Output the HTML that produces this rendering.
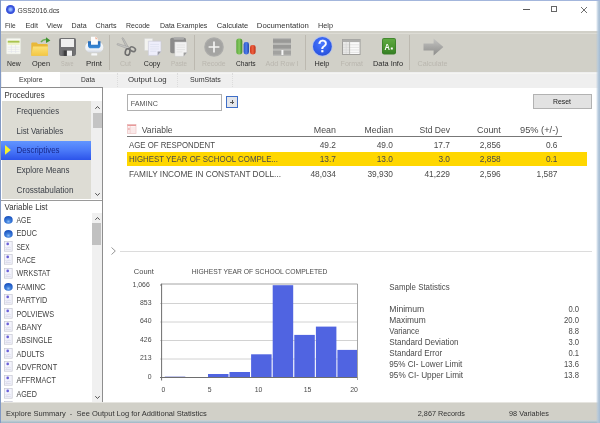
<!DOCTYPE html>
<html><head><meta charset="utf-8"><title>GSS2016.dcs</title>
<style>
html,body{margin:0;padding:0}
body{width:600px;height:423px;position:relative;overflow:hidden;background:#fff;font-family:"Liberation Sans",sans-serif}
.a{position:absolute}
.t{position:absolute;white-space:pre;display:block;will-change:transform}
svg{position:absolute;overflow:visible}
</style></head><body>
<!-- frame -->
<div class="a" style="left:0;top:0;width:600px;height:1px;background:#a3b6dc"></div>
<!-- window controls -->
<div class="a" style="left:522.5px;top:9.3px;width:7px;height:1px;background:#5a5a5a"></div>
<div class="a" style="left:551.3px;top:6.4px;width:5.6px;height:5.4px;border:1px solid #666;box-sizing:border-box"></div>
<svg style="left:581px;top:6.6px" width="6" height="6" viewBox="0 0 6 6"><path d="M0 0L6 6M6 0L0 6" stroke="#555" stroke-width="0.85" fill="none"/></svg>
<!-- title icon -->
<div class="a" style="left:6.2px;top:5.2px;width:8.6px;height:8.6px;border-radius:50%;background:radial-gradient(circle,#9fc0ff 0,#8ab0ff 18%,#3a55de 48%,#3048d4 100%)"></div>
<!-- toolbar -->
<div class="a" style="left:0;top:31.4px;width:600px;height:40.8px;background:#d1d0c8"></div>
<div class="a" style="left:0;top:33px;width:600px;height:1px;background:#dddcd5"></div>
<!-- separators -->
<div class="a" style="left:108.7px;top:35px;width:1px;height:35px;background:#bcb9b0"></div>
<div class="a" style="left:193.6px;top:35px;width:1px;height:35px;background:#bcb9b0"></div>
<div class="a" style="left:305.4px;top:35px;width:1px;height:35px;background:#bcb9b0"></div>
<div class="a" style="left:408.6px;top:35px;width:1px;height:35px;background:#bcb9b0"></div>
<!-- New -->
<svg style="left:6.2px;top:38.2px" width="15" height="16.4" viewBox="0 0 15 16.4">
<rect x="0.3" y="0.3" width="14.4" height="15.8" rx="1.2" fill="#f8f9f3" stroke="#dedfd6" stroke-width="0.6"/>
<rect x="1.7" y="2.7" width="11.8" height="2.1" fill="#a9c44e"/>
<rect x="1.7" y="4.8" width="11.8" height="2.2" fill="#eef3cc"/>
<path d="M1.7 9.2H13.5M1.7 11.4H13.5M1.7 13.6H13.5M5.4 7V15M9.6 7V15" stroke="#e0e3ea" stroke-width="0.6" fill="none"/>
</svg>
<!-- Open -->
<svg style="left:31.4px;top:36.6px" width="20" height="19" viewBox="0 0 20 19">
<defs><linearGradient id="fg" x1="0" y1="0" x2="0" y2="1"><stop offset="0" stop-color="#fbe17a"/><stop offset="1" stop-color="#f4c742"/></linearGradient></defs>
<path d="M0.3 6.6 Q0.3 5.6 1.3 5.6 H5.6 L7 7 H15.8 Q16.8 7 16.8 8 V18.6 H0.3Z" fill="#e9b838"/>
<path d="M2 9.4 H16.9 V18.7 H0.2 Z" fill="url(#fg)"/>
<path d="M10 5 Q12.6 1.6 16.4 2.8" stroke="#58a840" stroke-width="1.5" fill="none" opacity=".85"/>
<path d="M15 0.3 L19.4 3.6 L15 6 Z" fill="#3f9230"/>
</svg>
<!-- Save (disabled) -->
<svg style="left:58.9px;top:37.6px" width="17" height="18" viewBox="0 0 17 18">
<rect x="0" y="0" width="17" height="17.9" rx="1.8" fill="#717173"/>
<rect x="2" y="1" width="13" height="8" fill="#efefef"/>
<rect x="3.6" y="12.4" width="10.4" height="5.5" fill="#5a5a5c"/>
<rect x="5.1" y="12.6" width="2.8" height="5.3" fill="#3c3c3e"/>
<rect x="7.9" y="12.6" width="5.2" height="5.3" fill="#f1f1f1"/>
</svg>
<!-- Print -->
<svg style="left:85px;top:36px" width="18.5" height="20" viewBox="0 0 18.5 20">
<defs><linearGradient id="pb" x1="0" y1="0" x2="0" y2="1"><stop offset="0" stop-color="#f7f9fc"/><stop offset=".7" stop-color="#eef1f6"/><stop offset="1" stop-color="#cfd4de"/></linearGradient>
<linearGradient id="pl" x1="0" y1="0" x2="0" y2="1"><stop offset="0" stop-color="#2468b8"/><stop offset="1" stop-color="#3b8cd8"/></linearGradient></defs>
<rect x="0.2" y="6" width="18.1" height="10.6" rx="5.2" fill="url(#pb)"/>
<path d="M3 5.3 H15.5 V9.4 Q15.5 12.2 12.6 12.2 H5.9 Q3 12.2 3 9.4Z" fill="url(#pl)"/>
<path d="M6 0.8 H11 L12.9 2.7 V8.8 H6Z" fill="#fdfdfd"/>
<path d="M10.4 0.6 L13 3.2 H10.4Z" fill="#f2b49a"/>
<rect x="6.3" y="17.2" width="5.9" height="2.3" rx="0.6" fill="#f6f7f9"/>
</svg>
<!-- Cut (disabled) -->
<svg style="left:115.5px;top:36.5px" width="20" height="19" viewBox="0 0 20 19">
<path d="M5.9 1.2 Q6.6 0.2 7.4 1.2 L12.6 10.6 L11 11.8 Z" fill="#c2c2c0" stroke="#9b9b99" stroke-width="0.6"/>
<path d="M1 7.8 Q0.6 6.6 1.9 6.6 L13 10 L12 11.9 Z" fill="#c6c6c4" stroke="#a0a09e" stroke-width="0.6"/>
<ellipse cx="11.6" cy="15" rx="2.3" ry="3.3" transform="rotate(12 11.6 15)" fill="none" stroke="#6c6c6c" stroke-width="1.6"/>
<ellipse cx="16.6" cy="12.2" rx="3" ry="2.1" transform="rotate(28 16.6 12.2)" fill="none" stroke="#747474" stroke-width="1.6"/>
</svg>
<!-- Copy -->
<svg style="left:144px;top:38.2px" width="18" height="18" viewBox="0 0 18 18">
<rect x="0.4" y="0.3" width="8.4" height="12.4" fill="#f3f3f0" stroke="#d4d4d2" stroke-width="0.6"/>
<path d="M4.4 3.2 H17 V13.4 L13.6 17.4 H4.4Z" fill="#eeeefb" stroke="#c9cad6" stroke-width="0.6"/>
<path d="M6.2 6.4H15M6.2 8.7H15M6.2 11H15M6.2 13.3H12.4" stroke="#dadcec" stroke-width="0.7"/>
<path d="M17 13.4 H13.6 V17.4Z" fill="#9a9ba6"/>
</svg>
<!-- Paste (disabled) -->
<svg style="left:170.4px;top:36.8px" width="18" height="20" viewBox="0 0 18 20">
<rect x="0.2" y="0.8" width="15.8" height="15.4" rx="1.8" fill="#8b8b8b"/>
<rect x="3.6" y="0.2" width="10.4" height="2.6" rx="1" fill="#aaaaaa"/>
<path d="M4.8 4.9 H16.9 V15.4 L13.6 19.4 H4.8Z" fill="#f2f2f2" stroke="#c4c4c4" stroke-width="0.5"/>
<path d="M6.6 8H15M6.6 10.3H15M6.6 12.6H15M6.6 14.9H12.4" stroke="#dedede" stroke-width="0.7"/>
<path d="M16.9 15.4 H13.6 V19.4Z" fill="#9e9e9e"/>
</svg>
<!-- Recode (disabled) -->
<svg style="left:203.7px;top:37px" width="20" height="20" viewBox="0 0 20 20">
<circle cx="10" cy="10" r="9.8" fill="#acacaa"/>
<circle cx="10" cy="10" r="8.6" fill="#a4a4a2"/>
<path d="M10 4.6V15.4M4.6 10H15.4" stroke="#f4f4f2" stroke-width="1.7" fill="none"/>
</svg>
<!-- Charts -->
<svg style="left:236px;top:38px" width="20" height="17" viewBox="0 0 20 17">
<defs>
<linearGradient id="cg" x1="0" x2="1"><stop offset="0" stop-color="#5aa83a"/><stop offset=".5" stop-color="#86c860"/><stop offset="1" stop-color="#3f8a26"/></linearGradient>
<linearGradient id="cb" x1="0" x2="1"><stop offset="0" stop-color="#2a55c8"/><stop offset=".5" stop-color="#4d7ce8"/><stop offset="1" stop-color="#2046b0"/></linearGradient>
<linearGradient id="cr" x1="0" x2="1"><stop offset="0" stop-color="#d03a1e"/><stop offset=".5" stop-color="#ee6040"/><stop offset="1" stop-color="#b82c14"/></linearGradient>
</defs>
<rect x="0.3" y="0.6" width="6" height="15.8" rx="2.6" fill="url(#cg)"/>
<rect x="7.6" y="4" width="5.4" height="12.4" rx="2.4" fill="url(#cb)"/>
<rect x="14" y="7" width="5.6" height="9.4" rx="2.4" fill="url(#cr)"/>
</svg>
<!-- Add Row (disabled) -->
<svg style="left:273px;top:37.5px" width="18" height="18" viewBox="0 0 18 18">
<rect x="0" y="0" width="18" height="18" fill="#b9b9b6"/>
<rect x="0" y="1.2" width="18" height="3.6" fill="#999997"/>
<rect x="0" y="7" width="18" height="3.6" fill="#999997"/>
<rect x="0" y="12.8" width="18" height="3.8" fill="#a2a2a0"/>
<path d="M8.4 12 h2 v5 h-2z" fill="#f6f6f6"/>
</svg>
<!-- Help -->
<svg style="left:311.6px;top:35.8px;will-change:transform" width="21" height="21" viewBox="0 0 21 21">
<defs><radialGradient id="hg" cx=".45" cy=".35" r=".7"><stop offset="0" stop-color="#4a78ff"/><stop offset=".7" stop-color="#2f5be8"/><stop offset="1" stop-color="#2a4fd0"/></radialGradient></defs>
<circle cx="10.4" cy="10.4" r="10.3" fill="#b4c2ec"/>
<circle cx="10.4" cy="10.4" r="9.4" fill="url(#hg)"/>
<text x="10.5" y="16.3" font-family="Liberation Sans, sans-serif" font-size="16.5" fill="#fff" stroke="#fff" stroke-width="0.35" text-anchor="middle">?</text>
</svg>
<!-- Format (disabled) -->
<svg style="left:342.3px;top:38.8px" width="18.6" height="16" viewBox="0 0 18.6 16">
<rect x="0.5" y="0.5" width="17.6" height="15" fill="#fafafa" stroke="#a09f9c" stroke-width="1"/>
<rect x="0.5" y="0.5" width="17.6" height="2.6" fill="#aeaeac"/>
<rect x="1" y="3.1" width="6.6" height="11.9" fill="#e9e9e8"/>
<path d="M1 5.8H17.6M1 8.4H17.6M1 11H17.6M1 13.4H17.6M4.2 3V15" stroke="#d4d4d3" stroke-width="0.6" fill="none"/>
<path d="M7.6 3V15" stroke="#a8a8a6" stroke-width="0.8" fill="none"/>
</svg>
<!-- Data Info -->
<svg style="left:381.5px;top:38.2px;will-change:transform" width="15" height="17" viewBox="0 0 15 17">
<defs><linearGradient id="dg" x1="0" y1="0" x2="0" y2="1"><stop offset="0" stop-color="#5faa42"/><stop offset=".55" stop-color="#4a962f"/><stop offset="1" stop-color="#357f24"/></linearGradient></defs>
<rect x="0" y="0" width="14" height="16.5" rx="2.2" fill="#3a7d29"/>
<rect x="0.8" y="0.8" width="12.4" height="14.9" rx="1.6" fill="url(#dg)"/>
<text x="2.6" y="11.5" font-family="Liberation Sans, sans-serif" font-size="9.4" font-weight="bold" fill="#fff" textLength="5.4" lengthAdjust="spacingAndGlyphs">A</text>
<rect x="8.8" y="9.5" width="2" height="2" fill="#fff"/>
</svg>
<!-- Calculate (disabled) -->
<svg style="left:422.5px;top:37.5px" width="21" height="18" viewBox="0 0 21 18">
<defs><linearGradient id="ag" x1="0" y1="0" x2="0" y2="1"><stop offset="0" stop-color="#c4c4c2"/><stop offset="1" stop-color="#8c8c8a"/></linearGradient></defs>
<path d="M0.5 5.6 H10.6 V0.4 L20.4 9 L10.6 17.6 V12.4 H0.5Z" fill="url(#ag)"/>
</svg>

<!-- tabs -->
<div class="a" style="left:0;top:72.2px;width:600px;height:15.6px;background:#efefef"></div>
<div class="a" style="left:0;top:72.6px;width:600px;height:1.2px;background:#f5f5f3"></div>
<div class="a" style="left:1.5px;top:72.4px;width:58.5px;height:15.4px;background:#fff"></div>
<div class="a" style="left:116.5px;top:73px;width:0;height:14px;border-left:1px dotted #dcdcdc"></div>
<div class="a" style="left:176.5px;top:73px;width:0;height:14px;border-left:1px dotted #dcdcdc"></div>
<div class="a" style="left:231.5px;top:73px;width:0;height:14px;border-left:1px dotted #dcdcdc"></div>
<!-- left panel -->
<div class="a" style="left:0;top:87px;width:103px;height:1px;background:#8e8e8e"></div>
<!-- procedures list -->
<div class="a" style="left:2px;top:101.3px;width:89.3px;height:97.6px;background:#dddcd4"></div>
<div class="a" style="left:91.3px;top:101.3px;width:11.1px;height:97.6px;background:#efefef"></div>
<div class="a" style="left:1.2px;top:140.7px;width:90px;height:18.9px;background:linear-gradient(180deg,#6195ff 0,#4a79f8 50%,#2c53ea 100%)"></div>
<svg style="left:5.4px;top:145.3px" width="6" height="9.8" viewBox="0 0 6 9.8"><path d="M0 0L5.8 4.9L0 9.8Z" fill="#f7f22a"/></svg>
<!-- proc scrollbar -->
<svg style="left:94.5px;top:105.5px" width="5" height="3" viewBox="0 0 5 3"><path d="M0.3 2.8L2.5 0.5L4.7 2.8" stroke="#505050" stroke-width="1" fill="none"/></svg>
<div class="a" style="left:93px;top:112.5px;width:8.5px;height:15px;background:#c4c4c4"></div>
<svg style="left:94.5px;top:193px" width="5" height="3" viewBox="0 0 5 3"><path d="M0.3 0.2L2.5 2.5L4.7 0.2" stroke="#505050" stroke-width="1" fill="none"/></svg>
<div class="a" style="left:0;top:199.7px;width:103px;height:1px;background:#9a9a9a"></div>
<!-- variable list scrollbar -->
<div class="a" style="left:92px;top:213px;width:10.4px;height:189.5px;background:#f0f0f0"></div>
<svg style="left:94.7px;top:216.5px" width="5" height="3" viewBox="0 0 5 3"><path d="M0.3 2.8L2.5 0.5L4.7 2.8" stroke="#505050" stroke-width="1" fill="none"/></svg>
<div class="a" style="left:92.2px;top:223.2px;width:9.2px;height:22.2px;background:#c1c1c1"></div>
<svg style="left:94.7px;top:395.5px" width="5" height="3" viewBox="0 0 5 3"><path d="M0.3 0.2L2.5 2.5L4.7 0.2" stroke="#505050" stroke-width="1" fill="none"/></svg>
<svg width="0" height="0" style="left:0;top:0"><defs><radialGradient id="vb" cx=".5" cy=".72" r=".62"><stop offset="0" stop-color="#8cbcf8"/><stop offset=".4" stop-color="#3f80dc"/><stop offset="1" stop-color="#1d56c2"/></radialGradient></defs></svg>
<svg style="left:4.3px;top:216.2px" width="8.8" height="7.8" viewBox="0 0 8.8 7.8"><ellipse cx="4.4" cy="3.9" rx="4.3" ry="3.8" fill="url(#vb)"/></svg>
<svg style="left:4.3px;top:229.6px" width="8.8" height="7.8" viewBox="0 0 8.8 7.8"><ellipse cx="4.4" cy="3.9" rx="4.3" ry="3.8" fill="url(#vb)"/></svg>
<svg style="left:4.1px;top:240.8px" width="8.6" height="10.6" viewBox="0 0 8.6 10.6"><rect x="0.4" y="0.4" width="7.8" height="9.8" fill="#f3f3fc" stroke="#c6c7d2" stroke-width="0.7"/><circle cx="3.7" cy="2.9" r="1.3" fill="#6a60d8"/><path d="M1.4 6.4 Q2.6 7.6 3.8 6.6 T6.6 6.6M1.4 8.4H6.8" stroke="#cfd0e2" stroke-width="0.7" fill="none"/></svg>
<svg style="left:4.1px;top:254.2px" width="8.6" height="10.6" viewBox="0 0 8.6 10.6"><rect x="0.4" y="0.4" width="7.8" height="9.8" fill="#f3f3fc" stroke="#c6c7d2" stroke-width="0.7"/><circle cx="3.7" cy="2.9" r="1.3" fill="#6a60d8"/><path d="M1.4 6.4 Q2.6 7.6 3.8 6.6 T6.6 6.6M1.4 8.4H6.8" stroke="#cfd0e2" stroke-width="0.7" fill="none"/></svg>
<svg style="left:4.1px;top:267.6px" width="8.6" height="10.6" viewBox="0 0 8.6 10.6"><rect x="0.4" y="0.4" width="7.8" height="9.8" fill="#f3f3fc" stroke="#c6c7d2" stroke-width="0.7"/><circle cx="3.7" cy="2.9" r="1.3" fill="#6a60d8"/><path d="M1.4 6.4 Q2.6 7.6 3.8 6.6 T6.6 6.6M1.4 8.4H6.8" stroke="#cfd0e2" stroke-width="0.7" fill="none"/></svg>
<svg style="left:4.3px;top:283.0px" width="8.8" height="7.8" viewBox="0 0 8.8 7.8"><ellipse cx="4.4" cy="3.9" rx="4.3" ry="3.8" fill="url(#vb)"/></svg>
<svg style="left:4.1px;top:294.3px" width="8.6" height="10.6" viewBox="0 0 8.6 10.6"><rect x="0.4" y="0.4" width="7.8" height="9.8" fill="#f3f3fc" stroke="#c6c7d2" stroke-width="0.7"/><circle cx="3.7" cy="2.9" r="1.3" fill="#6a60d8"/><path d="M1.4 6.4 Q2.6 7.6 3.8 6.6 T6.6 6.6M1.4 8.4H6.8" stroke="#cfd0e2" stroke-width="0.7" fill="none"/></svg>
<svg style="left:4.1px;top:307.7px" width="8.6" height="10.6" viewBox="0 0 8.6 10.6"><rect x="0.4" y="0.4" width="7.8" height="9.8" fill="#f3f3fc" stroke="#c6c7d2" stroke-width="0.7"/><circle cx="3.7" cy="2.9" r="1.3" fill="#6a60d8"/><path d="M1.4 6.4 Q2.6 7.6 3.8 6.6 T6.6 6.6M1.4 8.4H6.8" stroke="#cfd0e2" stroke-width="0.7" fill="none"/></svg>
<svg style="left:4.1px;top:321.1px" width="8.6" height="10.6" viewBox="0 0 8.6 10.6"><rect x="0.4" y="0.4" width="7.8" height="9.8" fill="#f3f3fc" stroke="#c6c7d2" stroke-width="0.7"/><circle cx="3.7" cy="2.9" r="1.3" fill="#6a60d8"/><path d="M1.4 6.4 Q2.6 7.6 3.8 6.6 T6.6 6.6M1.4 8.4H6.8" stroke="#cfd0e2" stroke-width="0.7" fill="none"/></svg>
<svg style="left:4.1px;top:334.4px" width="8.6" height="10.6" viewBox="0 0 8.6 10.6"><rect x="0.4" y="0.4" width="7.8" height="9.8" fill="#f3f3fc" stroke="#c6c7d2" stroke-width="0.7"/><circle cx="3.7" cy="2.9" r="1.3" fill="#6a60d8"/><path d="M1.4 6.4 Q2.6 7.6 3.8 6.6 T6.6 6.6M1.4 8.4H6.8" stroke="#cfd0e2" stroke-width="0.7" fill="none"/></svg>
<svg style="left:4.1px;top:347.8px" width="8.6" height="10.6" viewBox="0 0 8.6 10.6"><rect x="0.4" y="0.4" width="7.8" height="9.8" fill="#f3f3fc" stroke="#c6c7d2" stroke-width="0.7"/><circle cx="3.7" cy="2.9" r="1.3" fill="#6a60d8"/><path d="M1.4 6.4 Q2.6 7.6 3.8 6.6 T6.6 6.6M1.4 8.4H6.8" stroke="#cfd0e2" stroke-width="0.7" fill="none"/></svg>
<svg style="left:4.1px;top:361.2px" width="8.6" height="10.6" viewBox="0 0 8.6 10.6"><rect x="0.4" y="0.4" width="7.8" height="9.8" fill="#f3f3fc" stroke="#c6c7d2" stroke-width="0.7"/><circle cx="3.7" cy="2.9" r="1.3" fill="#6a60d8"/><path d="M1.4 6.4 Q2.6 7.6 3.8 6.6 T6.6 6.6M1.4 8.4H6.8" stroke="#cfd0e2" stroke-width="0.7" fill="none"/></svg>
<svg style="left:4.1px;top:374.5px" width="8.6" height="10.6" viewBox="0 0 8.6 10.6"><rect x="0.4" y="0.4" width="7.8" height="9.8" fill="#f3f3fc" stroke="#c6c7d2" stroke-width="0.7"/><circle cx="3.7" cy="2.9" r="1.3" fill="#6a60d8"/><path d="M1.4 6.4 Q2.6 7.6 3.8 6.6 T6.6 6.6M1.4 8.4H6.8" stroke="#cfd0e2" stroke-width="0.7" fill="none"/></svg>
<svg style="left:4.1px;top:387.9px" width="8.6" height="10.6" viewBox="0 0 8.6 10.6"><rect x="0.4" y="0.4" width="7.8" height="9.8" fill="#f3f3fc" stroke="#c6c7d2" stroke-width="0.7"/><circle cx="3.7" cy="2.9" r="1.3" fill="#6a60d8"/><path d="M1.4 6.4 Q2.6 7.6 3.8 6.6 T6.6 6.6M1.4 8.4H6.8" stroke="#cfd0e2" stroke-width="0.7" fill="none"/></svg>
<svg style="left:4.1px;top:401.3px" width="8.6" height="10.6" viewBox="0 0 8.6 10.6"><rect x="0.4" y="0.4" width="7.8" height="9.8" fill="#f3f3fc" stroke="#c6c7d2" stroke-width="0.7"/><circle cx="3.7" cy="2.9" r="1.3" fill="#6a60d8"/><path d="M1.4 6.4 Q2.6 7.6 3.8 6.6 T6.6 6.6M1.4 8.4H6.8" stroke="#cfd0e2" stroke-width="0.7" fill="none"/></svg>
<div class="a" style="left:102.4px;top:87px;width:1px;height:315.5px;background:#8e8e8e"></div>

<!-- input -->
<div class="a" style="left:127px;top:94px;width:95px;height:17px;border:1px solid #b0b0b0;box-sizing:border-box;background:#fff"></div>
<div class="a" style="left:226px;top:95.7px;width:12px;height:12.6px;border:1px solid #3f6fc8;box-sizing:border-box;background:#e4e6ea"></div>
<div class="a" style="left:230.1px;top:101.6px;width:3.8px;height:0.9px;background:#555"></div>
<div class="a" style="left:231.55px;top:100.1px;width:0.9px;height:3.8px;background:#555"></div>
<!-- reset -->
<div class="a" style="left:533px;top:94px;width:59px;height:15px;border:1px solid #b2b2b2;box-sizing:border-box;background:#e2e2e2"></div>
<!-- table -->
<div class="a" style="left:127px;top:136px;width:435px;height:1px;background:#777"></div>
<div class="a" style="left:126.7px;top:151.6px;width:460px;height:14.2px;background:#ffd700"></div>
<svg style="left:127.2px;top:124px" width="9.4" height="10" viewBox="0 0 9.4 10"><rect x="0.4" y="0.4" width="8.6" height="9.2" fill="#fff" stroke="#ecc2c2" stroke-width="0.7"/><rect x="0.4" y="0.6" width="8.6" height="1.5" fill="#e79a9a"/><path d="M0.6 4H8.8M0.6 6H8.8M0.6 8H8.8" stroke="#f0b8b8" stroke-width="0.6"/><path d="M3.2 2V9.4" stroke="#f0c4c4" stroke-width="0.6"/><rect x="1.2" y="4.4" width="1.4" height="1.2" fill="#e68a8a"/></svg>
<!-- splitter -->
<svg style="left:110.5px;top:247px" width="5" height="8" viewBox="0 0 5 8"><path d="M0.5 0.5L4.3 4L0.5 7.5" stroke="#8a8a8a" stroke-width="0.9" fill="none"/></svg>
<div class="a" style="left:120px;top:250.6px;width:472px;height:1px;background:#dcdcdc"></div>
<svg style="left:0;top:0" width="600" height="423" viewBox="0 0 600 423">
<path d="M160.0 359.0H357.5" stroke="#cdcdcd" stroke-width="0.9" fill="none"/>
<path d="M160.0 340.5H357.5" stroke="#cdcdcd" stroke-width="0.9" fill="none"/>
<path d="M160.0 322.0H357.5" stroke="#cdcdcd" stroke-width="0.9" fill="none"/>
<path d="M160.0 303.5H357.5" stroke="#cdcdcd" stroke-width="0.9" fill="none"/>
<rect x="164.8" y="376.4" width="20.5" height="1.1" fill="#9aa0dc"/>
<rect x="208.0" y="374.0" width="20.5" height="3.5" fill="#5064e1"/>
<rect x="229.5" y="372.0" width="20.5" height="5.5" fill="#5064e1"/>
<rect x="251.1" y="354.3" width="20.5" height="23.2" fill="#5064e1"/>
<rect x="272.7" y="285.2" width="20.5" height="92.3" fill="#5064e1"/>
<rect x="294.3" y="334.9" width="20.5" height="42.6" fill="#5064e1"/>
<rect x="315.9" y="326.6" width="20.5" height="50.9" fill="#5064e1"/>
<rect x="337.4" y="349.9" width="19.6" height="27.6" fill="#5064e1"/>
<path d="M161.6 284.0H357.5V377.5" stroke="#9a9a9a" stroke-width="0.9" fill="none"/>
<path d="M161.6 283.6V380.5" stroke="#6e6e6e" stroke-width="1" fill="none"/>
<path d="M160.0 377.5H357.5" stroke="#6e6e6e" stroke-width="1" fill="none"/>
<path d="M160.0 285.0H161.6" stroke="#6e6e6e" stroke-width="0.9" fill="none"/>
<path d="M357.5 377.5V380.0" stroke="#8a8a8a" stroke-width="0.8" fill="none"/>
</svg>
<!-- status bar -->
<div class="a" style="left:0;top:402.5px;width:600px;height:17px;background:#d1d0c8"></div>
<div class="a" style="left:0;top:402.3px;width:600px;height:1px;background:#e6e5e0"></div>
<!-- borders -->
<div class="a" style="left:0;top:419.5px;width:600px;height:3.5px;background:linear-gradient(#d0d6d6,#9db7c7)"></div>
<div class="a" style="left:596.3px;top:1px;width:3.7px;height:422px;background:linear-gradient(90deg,rgba(185,205,224,0),rgba(180,200,220,.9) 50%,#a4bbd2)"></div>
<div class="a" style="left:0;top:0;width:1.1px;height:423px;background:#8299c4"></div>
<svg style="left:0;top:0;white-space:pre;will-change:transform" width="600" height="423" viewBox="0 0 600 423" font-family="Liberation Sans, sans-serif">
<text x="17.5" y="12.72" font-size="8" fill="#333" text-anchor="start" textLength="42.0" lengthAdjust="spacingAndGlyphs">GSS2016.dcs</text>
<text x="5.0" y="27.62" font-size="8" fill="#333" text-anchor="start" textLength="10.6" lengthAdjust="spacingAndGlyphs">File</text>
<text x="25.4" y="27.62" font-size="8" fill="#333" text-anchor="start" textLength="12.6" lengthAdjust="spacingAndGlyphs">Edit</text>
<text x="46.6" y="27.62" font-size="8" fill="#333" text-anchor="start" textLength="15.8" lengthAdjust="spacingAndGlyphs">View</text>
<text x="71.6" y="27.62" font-size="8" fill="#333" text-anchor="start" textLength="15.0" lengthAdjust="spacingAndGlyphs">Data</text>
<text x="95.6" y="27.62" font-size="8" fill="#333" text-anchor="start" textLength="21.0" lengthAdjust="spacingAndGlyphs">Charts</text>
<text x="126.0" y="27.62" font-size="8" fill="#333" text-anchor="start" textLength="24.0" lengthAdjust="spacingAndGlyphs">Recode</text>
<text x="160.0" y="27.62" font-size="8" fill="#333" text-anchor="start" textLength="47.3" lengthAdjust="spacingAndGlyphs">Data Examples</text>
<text x="216.8" y="27.62" font-size="8" fill="#333" text-anchor="start" textLength="31.5" lengthAdjust="spacingAndGlyphs">Calculate</text>
<text x="256.8" y="27.62" font-size="8" fill="#333" text-anchor="start" textLength="52.0" lengthAdjust="spacingAndGlyphs">Documentation</text>
<text x="318.0" y="27.62" font-size="8" fill="#333" text-anchor="start" textLength="15.0" lengthAdjust="spacingAndGlyphs">Help</text>
<text x="7.0" y="65.52" font-size="8" fill="#2a2a2a" text-anchor="start" textLength="13.6" lengthAdjust="spacingAndGlyphs">New</text>
<text x="32.0" y="65.52" font-size="8" fill="#2a2a2a" text-anchor="start" textLength="18.0" lengthAdjust="spacingAndGlyphs">Open</text>
<text x="61.0" y="65.52" font-size="8" fill="#b9b6ae" text-anchor="start" textLength="12.5" lengthAdjust="spacingAndGlyphs">Save</text>
<text x="86.0" y="65.52" font-size="8" fill="#2a2a2a" text-anchor="start" textLength="16.0" lengthAdjust="spacingAndGlyphs">Print</text>
<text x="120.0" y="65.52" font-size="8" fill="#b9b6ae" text-anchor="start" textLength="11.0" lengthAdjust="spacingAndGlyphs">Cut</text>
<text x="143.8" y="65.52" font-size="8" fill="#2a2a2a" text-anchor="start" textLength="16.5" lengthAdjust="spacingAndGlyphs">Copy</text>
<text x="171.0" y="65.52" font-size="8" fill="#b9b6ae" text-anchor="start" textLength="16.0" lengthAdjust="spacingAndGlyphs">Paste</text>
<text x="202.0" y="65.52" font-size="8" fill="#b9b6ae" text-anchor="start" textLength="23.6" lengthAdjust="spacingAndGlyphs">Recode</text>
<text x="236.0" y="65.52" font-size="8" fill="#2a2a2a" text-anchor="start" textLength="19.6" lengthAdjust="spacingAndGlyphs">Charts</text>
<text x="265.6" y="65.52" font-size="8" fill="#b9b6ae" text-anchor="start" textLength="33.0" lengthAdjust="spacingAndGlyphs">Add Row I</text>
<text x="314.4" y="65.52" font-size="8" fill="#2a2a2a" text-anchor="start" textLength="15.0" lengthAdjust="spacingAndGlyphs">Help</text>
<text x="340.6" y="65.52" font-size="8" fill="#b9b6ae" text-anchor="start" textLength="22.4" lengthAdjust="spacingAndGlyphs">Format</text>
<text x="373.0" y="65.52" font-size="8" fill="#2a2a2a" text-anchor="start" textLength="30.0" lengthAdjust="spacingAndGlyphs">Data Info</text>
<text x="417.5" y="65.52" font-size="8" fill="#b9b6ae" text-anchor="start" textLength="30.0" lengthAdjust="spacingAndGlyphs">Calculate</text>
<text x="19.0" y="82.12" font-size="8" fill="#333" text-anchor="start" textLength="23.5" lengthAdjust="spacingAndGlyphs">Explore</text>
<text x="81.0" y="82.12" font-size="8" fill="#333" text-anchor="start" textLength="14.0" lengthAdjust="spacingAndGlyphs">Data</text>
<text x="128.0" y="82.12" font-size="8" fill="#333" text-anchor="start" textLength="38.7" lengthAdjust="spacingAndGlyphs">Output Log</text>
<text x="190.0" y="82.12" font-size="8" fill="#333" text-anchor="start" textLength="30.7" lengthAdjust="spacingAndGlyphs">SumStats</text>
<text x="4.6" y="97.90" font-size="8.5" fill="#333" text-anchor="start" textLength="40.0" lengthAdjust="spacingAndGlyphs">Procedures</text>
<text x="16.5" y="114.29" font-size="8.2" fill="#3c4048" text-anchor="start" textLength="42.5" lengthAdjust="spacingAndGlyphs">Frequencies</text>
<text x="16.5" y="133.89" font-size="8.2" fill="#3c4048" text-anchor="start" textLength="46.7" lengthAdjust="spacingAndGlyphs">List Variables</text>
<text x="16.5" y="153.49" font-size="8.2" fill="#18288a" text-anchor="start" textLength="43.0" lengthAdjust="spacingAndGlyphs">Descriptives</text>
<text x="16.5" y="173.09" font-size="8.2" fill="#3c4048" text-anchor="start" textLength="53.0" lengthAdjust="spacingAndGlyphs">Explore Means</text>
<text x="16.5" y="192.69" font-size="8.2" fill="#3c4048" text-anchor="start" textLength="57.0" lengthAdjust="spacingAndGlyphs">Crosstabulation</text>
<text x="4.5" y="209.60" font-size="8.5" fill="#333" text-anchor="start" textLength="43.0" lengthAdjust="spacingAndGlyphs">Variable List</text>
<text x="16.5" y="222.93" font-size="8.3" fill="#404040" text-anchor="start" textLength="14.5" lengthAdjust="spacingAndGlyphs">AGE</text>
<text x="16.5" y="236.30" font-size="8.3" fill="#404040" text-anchor="start" textLength="20.6" lengthAdjust="spacingAndGlyphs">EDUC</text>
<text x="16.5" y="249.67" font-size="8.3" fill="#404040" text-anchor="start" textLength="13.0" lengthAdjust="spacingAndGlyphs">SEX</text>
<text x="16.5" y="263.04" font-size="8.3" fill="#404040" text-anchor="start" textLength="19.0" lengthAdjust="spacingAndGlyphs">RACE</text>
<text x="16.5" y="276.41" font-size="8.3" fill="#404040" text-anchor="start" textLength="33.8" lengthAdjust="spacingAndGlyphs">WRKSTAT</text>
<text x="16.5" y="289.78" font-size="8.3" fill="#404040" text-anchor="start" textLength="29.2" lengthAdjust="spacingAndGlyphs">FAMINC</text>
<text x="16.5" y="303.15" font-size="8.3" fill="#404040" text-anchor="start" textLength="30.8" lengthAdjust="spacingAndGlyphs">PARTYID</text>
<text x="16.5" y="316.52" font-size="8.3" fill="#404040" text-anchor="start" textLength="37.5" lengthAdjust="spacingAndGlyphs">POLVIEWS</text>
<text x="16.5" y="329.89" font-size="8.3" fill="#404040" text-anchor="start" textLength="25.6" lengthAdjust="spacingAndGlyphs">ABANY</text>
<text x="16.5" y="343.26" font-size="8.3" fill="#404040" text-anchor="start" textLength="35.8" lengthAdjust="spacingAndGlyphs">ABSINGLE</text>
<text x="16.5" y="356.63" font-size="8.3" fill="#404040" text-anchor="start" textLength="27.9" lengthAdjust="spacingAndGlyphs">ADULTS</text>
<text x="16.5" y="370.00" font-size="8.3" fill="#404040" text-anchor="start" textLength="40.7" lengthAdjust="spacingAndGlyphs">ADVFRONT</text>
<text x="16.5" y="383.37" font-size="8.3" fill="#404040" text-anchor="start" textLength="39.5" lengthAdjust="spacingAndGlyphs">AFFRMACT</text>
<text x="16.5" y="396.74" font-size="8.3" fill="#404040" text-anchor="start" textLength="20.3" lengthAdjust="spacingAndGlyphs">AGED</text>
<text x="130.8" y="105.62" font-size="8" fill="#555" text-anchor="start" textLength="27.2" lengthAdjust="spacingAndGlyphs">FAMINC</text>
<text x="562.0" y="104.42" font-size="8" fill="#222" text-anchor="middle" textLength="18.0" lengthAdjust="spacingAndGlyphs">Reset</text>
<text x="141.8" y="132.88" font-size="9" fill="#4a4a4a" text-anchor="start" textLength="30.8" lengthAdjust="spacingAndGlyphs">Variable</text>
<text x="336.0" y="132.88" font-size="9" fill="#4a4a4a" text-anchor="end" textLength="22.2" lengthAdjust="spacingAndGlyphs">Mean</text>
<text x="393.0" y="132.88" font-size="9" fill="#4a4a4a" text-anchor="end" textLength="28.4" lengthAdjust="spacingAndGlyphs">Median</text>
<text x="450.0" y="132.88" font-size="9" fill="#4a4a4a" text-anchor="end" textLength="30.4" lengthAdjust="spacingAndGlyphs">Std Dev</text>
<text x="500.8" y="132.88" font-size="9" fill="#4a4a4a" text-anchor="end" textLength="23.8" lengthAdjust="spacingAndGlyphs">Count</text>
<text x="558.3" y="132.88" font-size="9" fill="#4a4a4a" text-anchor="end" textLength="38.3" lengthAdjust="spacingAndGlyphs">95% (+/-)</text>
<text x="129.0" y="147.58" font-size="9" fill="#4a4a4a" text-anchor="start" textLength="86.0" lengthAdjust="spacingAndGlyphs">AGE OF RESPONDENT</text>
<text x="336.0" y="147.58" font-size="9" fill="#4a4a4a" text-anchor="end" textLength="16.3" lengthAdjust="spacingAndGlyphs">49.2</text>
<text x="393.0" y="147.58" font-size="9" fill="#4a4a4a" text-anchor="end" textLength="16.3" lengthAdjust="spacingAndGlyphs">49.0</text>
<text x="450.0" y="147.58" font-size="9" fill="#4a4a4a" text-anchor="end" textLength="16.3" lengthAdjust="spacingAndGlyphs">17.7</text>
<text x="500.8" y="147.58" font-size="9" fill="#4a4a4a" text-anchor="end" textLength="21.0" lengthAdjust="spacingAndGlyphs">2,856</text>
<text x="557.5" y="147.58" font-size="9" fill="#4a4a4a" text-anchor="end" textLength="11.6" lengthAdjust="spacingAndGlyphs">0.6</text>
<text x="129.0" y="162.28" font-size="9" fill="#4a4a4a" text-anchor="start" textLength="149.0" lengthAdjust="spacingAndGlyphs">HIGHEST YEAR OF SCHOOL COMPLE...</text>
<text x="336.0" y="162.28" font-size="9" fill="#4a4a4a" text-anchor="end" textLength="16.3" lengthAdjust="spacingAndGlyphs">13.7</text>
<text x="393.0" y="162.28" font-size="9" fill="#4a4a4a" text-anchor="end" textLength="16.3" lengthAdjust="spacingAndGlyphs">13.0</text>
<text x="450.0" y="162.28" font-size="9" fill="#4a4a4a" text-anchor="end" textLength="11.6" lengthAdjust="spacingAndGlyphs">3.0</text>
<text x="500.8" y="162.28" font-size="9" fill="#4a4a4a" text-anchor="end" textLength="21.0" lengthAdjust="spacingAndGlyphs">2,858</text>
<text x="557.5" y="162.28" font-size="9" fill="#4a4a4a" text-anchor="end" textLength="11.6" lengthAdjust="spacingAndGlyphs">0.1</text>
<text x="129.0" y="176.98" font-size="9" fill="#4a4a4a" text-anchor="start" textLength="152.0" lengthAdjust="spacingAndGlyphs">FAMILY INCOME IN CONSTANT DOLL...</text>
<text x="336.0" y="176.98" font-size="9" fill="#4a4a4a" text-anchor="end" textLength="25.6" lengthAdjust="spacingAndGlyphs">48,034</text>
<text x="393.0" y="176.98" font-size="9" fill="#4a4a4a" text-anchor="end" textLength="25.6" lengthAdjust="spacingAndGlyphs">39,930</text>
<text x="450.0" y="176.98" font-size="9" fill="#4a4a4a" text-anchor="end" textLength="25.6" lengthAdjust="spacingAndGlyphs">41,229</text>
<text x="500.8" y="176.98" font-size="9" fill="#4a4a4a" text-anchor="end" textLength="21.0" lengthAdjust="spacingAndGlyphs">2,596</text>
<text x="557.5" y="176.98" font-size="9" fill="#4a4a4a" text-anchor="end" textLength="21.0" lengthAdjust="spacingAndGlyphs">1,587</text>
<text x="133.8" y="273.73" font-size="7.5" fill="#4a4a4a" text-anchor="start" textLength="20.0" lengthAdjust="spacingAndGlyphs">Count</text>
<text x="191.7" y="273.53" font-size="7.5" fill="#4a4a4a" text-anchor="start" textLength="135.8" lengthAdjust="spacingAndGlyphs">HIGHEST YEAR OF SCHOOL COMPLETED</text>
<text x="149.8" y="287.33" font-size="7.5" fill="#4a4a4a" text-anchor="end" textLength="17.3" lengthAdjust="spacingAndGlyphs">1,066</text>
<text x="151.5" y="305.13" font-size="7.5" fill="#4a4a4a" text-anchor="end" textLength="11.5" lengthAdjust="spacingAndGlyphs">853</text>
<text x="151.5" y="323.43" font-size="7.5" fill="#4a4a4a" text-anchor="end" textLength="11.5" lengthAdjust="spacingAndGlyphs">640</text>
<text x="151.5" y="341.93" font-size="7.5" fill="#4a4a4a" text-anchor="end" textLength="11.5" lengthAdjust="spacingAndGlyphs">426</text>
<text x="151.5" y="360.23" font-size="7.5" fill="#4a4a4a" text-anchor="end" textLength="11.5" lengthAdjust="spacingAndGlyphs">213</text>
<text x="151.5" y="378.93" font-size="7.5" fill="#4a4a4a" text-anchor="end" textLength="3.8" lengthAdjust="spacingAndGlyphs">0</text>
<text x="163.4" y="391.73" font-size="7.5" fill="#4a4a4a" text-anchor="middle" textLength="3.8" lengthAdjust="spacingAndGlyphs">0</text>
<text x="209.7" y="391.73" font-size="7.5" fill="#4a4a4a" text-anchor="middle" textLength="3.8" lengthAdjust="spacingAndGlyphs">5</text>
<text x="258.5" y="391.73" font-size="7.5" fill="#4a4a4a" text-anchor="middle" textLength="7.7" lengthAdjust="spacingAndGlyphs">10</text>
<text x="307.5" y="391.73" font-size="7.5" fill="#4a4a4a" text-anchor="middle" textLength="7.7" lengthAdjust="spacingAndGlyphs">15</text>
<text x="354.0" y="391.73" font-size="7.5" fill="#4a4a4a" text-anchor="middle" textLength="7.7" lengthAdjust="spacingAndGlyphs">20</text>
<text x="389.3" y="290.17" font-size="8.7" fill="#4a4a4a" text-anchor="start" textLength="60.4" lengthAdjust="spacingAndGlyphs">Sample Statistics</text>
<text x="389.3" y="312.47" font-size="8.7" fill="#4a4a4a" text-anchor="start" textLength="35.0" lengthAdjust="spacingAndGlyphs">Minimum</text>
<text x="579.0" y="312.47" font-size="8.7" fill="#4a4a4a" text-anchor="end" textLength="10.6" lengthAdjust="spacingAndGlyphs">0.0</text>
<text x="389.3" y="323.42" font-size="8.7" fill="#4a4a4a" text-anchor="start" textLength="36.4" lengthAdjust="spacingAndGlyphs">Maximum</text>
<text x="579.0" y="323.42" font-size="8.7" fill="#4a4a4a" text-anchor="end" textLength="14.9" lengthAdjust="spacingAndGlyphs">20.0</text>
<text x="389.3" y="334.37" font-size="8.7" fill="#4a4a4a" text-anchor="start" textLength="30.0" lengthAdjust="spacingAndGlyphs">Variance</text>
<text x="579.0" y="334.37" font-size="8.7" fill="#4a4a4a" text-anchor="end" textLength="10.6" lengthAdjust="spacingAndGlyphs">8.8</text>
<text x="389.3" y="345.32" font-size="8.7" fill="#4a4a4a" text-anchor="start" textLength="69.3" lengthAdjust="spacingAndGlyphs">Standard Deviation</text>
<text x="579.0" y="345.32" font-size="8.7" fill="#4a4a4a" text-anchor="end" textLength="10.6" lengthAdjust="spacingAndGlyphs">3.0</text>
<text x="389.3" y="356.27" font-size="8.7" fill="#4a4a4a" text-anchor="start" textLength="52.9" lengthAdjust="spacingAndGlyphs">Standard Error</text>
<text x="579.0" y="356.27" font-size="8.7" fill="#4a4a4a" text-anchor="end" textLength="10.6" lengthAdjust="spacingAndGlyphs">0.1</text>
<text x="389.3" y="367.22" font-size="8.7" fill="#4a4a4a" text-anchor="start" textLength="72.9" lengthAdjust="spacingAndGlyphs">95% CI- Lower Limit</text>
<text x="579.0" y="367.22" font-size="8.7" fill="#4a4a4a" text-anchor="end" textLength="14.9" lengthAdjust="spacingAndGlyphs">13.6</text>
<text x="389.3" y="378.17" font-size="8.7" fill="#4a4a4a" text-anchor="start" textLength="73.8" lengthAdjust="spacingAndGlyphs">95% CI- Upper Limit</text>
<text x="579.0" y="378.17" font-size="8.7" fill="#4a4a4a" text-anchor="end" textLength="14.9" lengthAdjust="spacingAndGlyphs">13.8</text>
<text x="6.0" y="415.92" font-size="8" fill="#333" text-anchor="start" textLength="200.8" lengthAdjust="spacingAndGlyphs">Explore Summary  -  See Output Log for Additional Statistics</text>
<text x="417.8" y="415.92" font-size="8" fill="#333" text-anchor="start" textLength="47.2" lengthAdjust="spacingAndGlyphs">2,867 Records</text>
<text x="509.0" y="415.92" font-size="8" fill="#333" text-anchor="start" textLength="40.0" lengthAdjust="spacingAndGlyphs">98 Variables</text>
</svg>
</body></html>
